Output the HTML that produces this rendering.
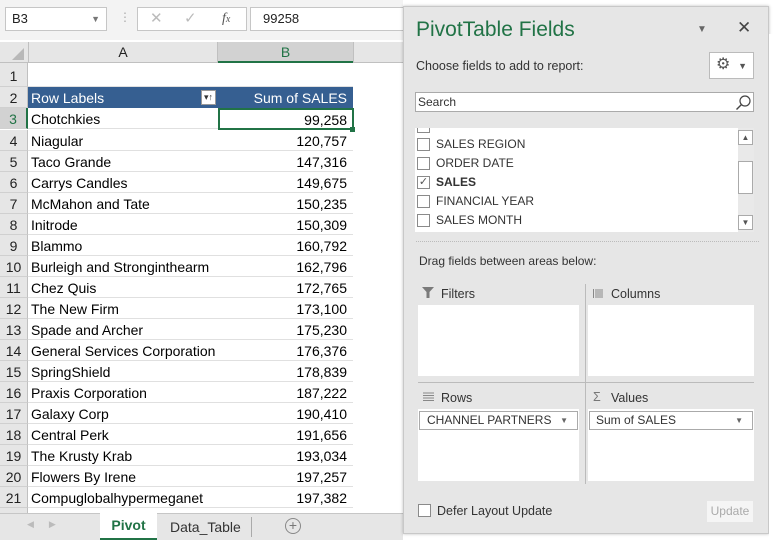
<!DOCTYPE html><html><head><style>
*{box-sizing:border-box;margin:0;padding:0}
body{width:774px;height:540px;position:relative;overflow:hidden;background:#fff;font-family:"Liberation Sans",sans-serif}
.a{position:absolute}
.rn{position:absolute;left:0;width:28px;height:21px;background:#e6e6e6;border-bottom:1px solid #d0d0d0;border-right:1px solid #c0c0c0;text-align:center;font-size:14px;line-height:22px;color:#222}
.rw{position:absolute;left:28px;width:325px;height:21px;border-bottom:1px solid #e0e0e0;font-size:14px;line-height:22px;color:#000}
.rw span{position:absolute;left:3px}.rw b{position:absolute;right:6px;font-weight:normal}
.cb{position:absolute;width:13px;height:13px;border:1px solid #8a8a8a;background:#fff}
.fl{position:absolute;left:436px;font-size:12px;color:#333}
.box{position:absolute;background:#fff}
.lbl{position:absolute;font-size:12.5px;color:#333}
</style></head><body>
<!-- formula bar -->
<div class="a" style="left:0;top:0;width:403px;height:40px;background:#f3f3f3"></div>
<div class="a" style="left:5px;top:7px;width:102px;height:24px;background:#fff;border:1px solid #c6c6c6;font-size:13px;line-height:22px;padding-left:6px;color:#222">B3<span style="position:absolute;right:6px;top:0;font-size:9px;color:#777">▼</span></div>
<div class="a" style="left:119px;top:10px;color:#aaa;font-size:12px">⋮</div>
<div class="a" style="left:137px;top:7px;width:110px;height:24px;background:#fff;border:1px solid #c6c6c6;font-size:15px;line-height:22px;color:#bbb"><span style="position:absolute;left:12px">✕</span><span style="position:absolute;left:46px">✓</span><span style="position:absolute;left:84px;color:#555;font-family:'Liberation Serif';font-style:italic;font-size:14px">f<small style="font-size:10px">x</small></span></div>
<div class="a" style="left:250px;top:7px;width:160px;height:24px;background:#fff;border:1px solid #c6c6c6;font-size:13px;line-height:22px;padding-left:12px;color:#222">99258</div>
<!-- col headers -->
<div class="a" style="left:0;top:42px;width:403px;height:21px;background:#e6e6e6;border-bottom:1px solid #c0c0c0"></div>
<div class="a" style="left:28px;top:42px;width:190px;height:21px;border-left:1px solid #c0c0c0;border-right:1px solid #c0c0c0;text-align:center;font-size:14px;line-height:21px;color:#222">A</div>
<div class="a" style="left:218px;top:42px;width:135px;height:21px;background:#d2d2d2;border-bottom:2px solid #217346;text-align:center;font-size:14px;line-height:21px;color:#217346">B</div>
<div class="a" style="left:353px;top:42px;height:21px;border-left:1px solid #c0c0c0"></div>
<div class="a" style="left:12px;top:48px;width:0;height:0;border-left:12px solid transparent;border-bottom:12px solid #b8b8b8"></div>
<div id="rows"></div>
<div class="rn" style="top:63px;height:24px;line-height:26px">1</div><div class="rw" style="top:63px;height:24px"></div>
<div class="rn" style="top:87px">2</div><div class="rw" style="top:87px;background:#365f91;color:#fff;border-bottom:1px solid #365f91"><span>Row Labels</span><b>Sum of SALES</b><div class="a" style="left:173px;top:3px;width:15px;height:15px;background:#fff;border:1px solid #999;font-size:9px;line-height:13px;color:#333;text-align:center">▾↑</div></div>
<div class="rn" style="top:108px;color:#217346;background:#d2d2d2;border-right:2px solid #217346">3</div><div class="rw" style="top:108px"><span>Chotchkies</span></div>
<div class="a" style="left:218px;top:108px;width:136px;height:22px;border:2px solid #217346;font-size:14px;line-height:20px;text-align:right;padding-right:5px">99,258</div>
<div class="a" style="left:350px;top:127px;width:5px;height:5px;background:#217346"></div>
<script>
var d=[["Niagular","120,757"],["Taco Grande","147,316"],["Carrys Candles","149,675"],["McMahon and Tate","150,235"],["Initrode","150,309"],["Blammo","160,792"],["Burleigh and Stronginthearm","162,796"],["Chez Quis","172,765"],["The New Firm","173,100"],["Spade and Archer","175,230"],["General Services Corporation","176,376"],["SpringShield","178,839"],["Praxis Corporation","187,222"],["Galaxy Corp","190,410"],["Central Perk","191,656"],["The Krusty Krab","193,034"],["Flowers By Irene","197,257"],["Compuglobalhypermeganet","197,382"]];
var h="";d.forEach(function(r,i){var t=130+i*21;h+='<div class="rn" style="top:'+t+'px">'+(i+4)+'</div><div class="rw" style="top:'+t+'px"><span>'+r[0]+'</span><b>'+r[1]+'</b></div>';});
h+='<div class="rn" style="top:508px;height:6px"></div>';
document.getElementById("rows").innerHTML=h;
</script>
<!-- tabs -->
<div class="a" style="left:0;top:513px;width:403px;height:27px;background:#e6e6e6;border-top:1px solid #c6c6c6"></div>
<div class="a" style="left:27px;top:519px;font-size:9px;color:#bbb">◀&nbsp;&nbsp;&nbsp;&nbsp;&nbsp;&nbsp;▶</div>
<div class="a" style="left:100px;top:513px;width:57px;height:27px;background:#fff;border-bottom:2px solid #217346;font-size:14px;font-weight:bold;color:#217346;text-align:center;line-height:25px">Pivot</div>
<div class="a" style="left:170px;top:519px;font-size:14px;color:#333">Data_Table</div>
<div class="a" style="left:251px;top:517px;height:20px;border-left:1px solid #aaa"></div>
<div class="a" style="left:285px;top:518px;width:16px;height:16px;border:1.5px solid #888;border-radius:50%;font-size:14px;line-height:12px;text-align:center;color:#777">+</div>
<!-- panel -->
<div class="a" style="left:403px;top:6px;width:366px;height:528px;background:#e6e6e6;border:1px solid #c8c8c8;box-shadow:0 0 3px rgba(0,0,0,.25)"></div>
<div class="a" style="left:769px;top:34px;width:5px;height:506px;background:#fff"></div>
<div class="a" style="left:416px;top:18px;font-size:21px;color:#217346">PivotTable Fields</div>
<div class="a" style="left:697px;top:24px;font-size:10px;color:#666">▼</div>
<div class="a" style="left:737px;top:18px;font-size:17px;color:#444">✕</div>
<div class="a" style="left:416px;top:59px;font-size:12.5px;color:#333">Choose fields to add to report:</div>
<div class="a" style="left:709px;top:52px;width:45px;height:27px;background:#fff;border:1px solid #bbb;font-size:16px;line-height:24px;padding-left:6px;color:#555">⚙<span style="font-size:9px;position:absolute;right:6px;top:1px">▼</span></div>
<div class="a" style="left:415px;top:92px;width:339px;height:20px;background:#fff;border:1px solid #aaa;font-size:12px;line-height:18px;padding-left:2px;color:#333">Search<svg style="position:absolute;right:1px;top:1px" width="17" height="17" viewBox="0 0 17 17"><circle cx="10" cy="7" r="5" fill="none" stroke="#444" stroke-width="1.2"/><path d="M6.5 10.5L1.5 15.5" stroke="#444" stroke-width="1.4"/></svg></div>
<div class="box" style="left:415px;top:128px;width:339px;height:104px"></div>
<div class="a" style="left:738px;top:128px;width:16px;height:104px;background:#e9e9e9"></div>
<div class="a" style="left:738px;top:130px;width:15px;height:15px;background:#fff;border:1px solid #aaa;font-size:8px;text-align:center;line-height:13px;color:#555">▲</div>
<div class="a" style="left:738px;top:161px;width:15px;height:33px;background:#fff;border:1px solid #aaa"></div>
<div class="a" style="left:738px;top:215px;width:15px;height:15px;background:#fff;border:1px solid #aaa;font-size:8px;text-align:center;line-height:13px;color:#555">▼</div>
<div class="cb" style="left:417px;top:128px;height:5px;border-top:none"></div>
<div class="cb" style="left:417px;top:138px"></div><div class="fl" style="top:137px">SALES REGION</div>
<div class="cb" style="left:417px;top:157px"></div><div class="fl" style="top:156px">ORDER DATE</div>
<div class="cb" style="left:417px;top:176px;font-size:11px;line-height:11px;color:#555;text-align:center">✓</div><div class="fl" style="top:175px;font-weight:bold">SALES</div>
<div class="cb" style="left:417px;top:195px"></div><div class="fl" style="top:194px">FINANCIAL YEAR</div>
<div class="cb" style="left:417px;top:214px"></div><div class="fl" style="top:213px">SALES MONTH</div>
<div class="a" style="left:416px;top:241px;width:343px;border-top:1px dotted #bbb"></div>
<div class="a" style="left:419px;top:254px;font-size:12px;color:#333">Drag fields between areas below:</div>
<div class="a" style="left:585px;top:284px;height:200px;border-left:1px solid #bbb"></div>
<div class="a" style="left:418px;top:382px;width:336px;border-top:1px solid #bbb"></div>
<svg class="a" style="left:422px;top:287px" width="12" height="12" viewBox="0 0 12 12"><path d="M0 0H12L7.5 5V11H4.5V5Z" fill="#7a7a7a"/></svg><div class="lbl" style="left:441px;top:287px">Filters</div>
<svg class="a" style="left:593px;top:289px" width="10" height="9"><path d="M0.5 0V9M3 0V9M5 0V9M7 0V9M9 0V9" stroke="#888" stroke-width="1"/></svg><div class="lbl" style="left:611px;top:287px">Columns</div>
<div class="box" style="left:418px;top:305px;width:161px;height:71px"></div>
<div class="box" style="left:588px;top:305px;width:166px;height:71px"></div>
<svg class="a" style="left:423px;top:392px" width="11" height="9"><path d="M0 1H11M0 3.5H11M0 6H11M0 8.5H11" stroke="#888" stroke-width="1"/></svg><div class="lbl" style="left:441px;top:391px">Rows</div>
<div class="lbl" style="left:593px;top:390px;color:#777">Σ</div><div class="lbl" style="left:611px;top:391px">Values</div>
<div class="box" style="left:418px;top:409px;width:161px;height:72px"></div>
<div class="box" style="left:588px;top:409px;width:166px;height:72px"></div>
<div class="a" style="left:419px;top:411px;width:159px;height:19px;border:1px solid #aaa;font-size:12px;line-height:17px;padding-left:7px;color:#333">CHANNEL PARTNERS<span style="position:absolute;right:9px;font-size:8px;color:#666">▼</span></div>
<div class="a" style="left:589px;top:411px;width:164px;height:19px;border:1px solid #aaa;font-size:12px;line-height:17px;padding-left:6px;color:#333">Sum of SALES<span style="position:absolute;right:9px;font-size:8px;color:#666">▼</span></div>
<div class="cb" style="left:418px;top:504px"></div>
<div class="lbl" style="left:437px;top:504px">Defer Layout Update</div>
<div class="a" style="left:707px;top:501px;width:46px;height:21px;background:#f5f5f5;font-size:12px;line-height:21px;text-align:center;color:#aaa">Update</div>
</body></html>
